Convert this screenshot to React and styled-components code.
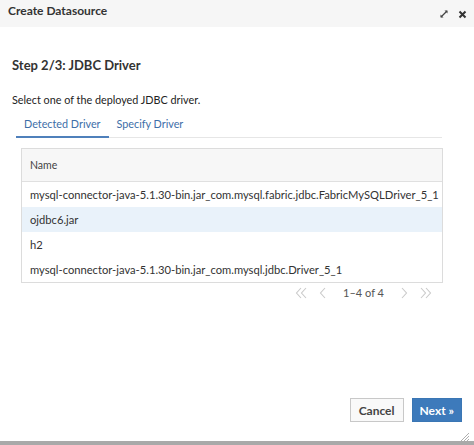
import styled, { createGlobalStyle } from "styled-components";

const GlobalStyle = createGlobalStyle`
  html, body {
    margin: 0;
    padding: 0;
    background: #fff;
  }
  body {
    font-family: Lato, "Open Sans", "Liberation Sans", sans-serif;
    color: #333;
  }
`;

const drivers = [
  "mysql-connector-java-5.1.30-bin.jar_com.mysql.fabric.jdbc.FabricMySQLDriver_5_1",
  "ojdbc6.jar",
  "h2",
  "mysql-connector-java-5.1.30-bin.jar_com.mysql.jdbc.Driver_5_1",
];

// thin chevrons for the pager, single or double
const Chevron = ({ dir = "left", double }) => {
  const flip = dir === "right" ? "scale(-1,1) translate(-14,0)" : undefined;
  return (
    <svg width="14" height="12" viewBox="0 0 14 12">
      <g transform={flip} fill="none" stroke="#c9c9c9" strokeWidth="1.1">
        <path d={double ? "M6 1 L1.5 6 L6 11" : "M9 1 L4.5 6 L9 11"} />
        {double && <path d="M11 1 L6.5 6 L11 11" />}
      </g>
    </svg>
  );
};

function App() {
  return (
    <>
      <GlobalStyle />
      <Dialog>
        <TitleBar>
          <h1>Create Datasource</h1>
          <TitleTools>
            <svg width="10" height="10" viewBox="0 0 10 10">
              <path d="M2 8 L8 2" stroke="#444" strokeWidth="1.3" />
              <path d="M5.5 1.5 H8.5 V4.5 Z" fill="#444" />
              <path d="M1.5 5.5 V8.5 H4.5 Z" fill="#444" />
            </svg>
            <svg width="9" height="9" viewBox="0 0 9 9">
              <path d="M1.5 1.5 L7.5 7.5 M7.5 1.5 L1.5 7.5" stroke="#333" strokeWidth="2" />
            </svg>
          </TitleTools>
        </TitleBar>

        <Body>
          <StepTitle>Step 2/3: JDBC Driver</StepTitle>
          <Hint>Select one of the deployed JDBC driver.</Hint>

          <Tabs>
            <Tab $active>Detected Driver</Tab>
            <Tab>Specify Driver</Tab>
          </Tabs>

          <Table>
            <HeadRow>Name</HeadRow>
            {drivers.map((d, i) => (
              <Row key={d} $selected={i === 1}>
                {d}
              </Row>
            ))}
          </Table>

          <Pager>
            <Chevron double />
            <Chevron />
            <PageInfo>1–4 of 4</PageInfo>
            <Chevron dir="right" />
            <Chevron dir="right" double />
          </Pager>
        </Body>

        <Footer>
          <Button>Cancel</Button>
          <Button $primary>Next »</Button>
        </Footer>

        <BottomEdge>
          <Grip width="10" height="10" viewBox="0 0 10 10">
            <path d="M9 1 L1 9 M9 4 L4 9 M9 7 L7 9" stroke="#999" strokeWidth="0.8" />
          </Grip>
        </BottomEdge>
      </Dialog>
    </>
  );
}

export default App;

const Dialog = styled.div`
  width: 474px;
  height: 445px;
  display: flex;
  flex-direction: column;
  background: #fff;
  position: relative;
  overflow: hidden;
`;

const TitleBar = styled.div`
  height: 27px;
  background: #f6f6f6;
  display: flex;
  align-items: flex-start;
  justify-content: space-between;
  padding: 0 7px 0 8px;

  & h1 {
    margin: 3px 0 0;
    font-size: 12px;
    font-weight: 700;
    color: #333;
  }
`;

const TitleTools = styled.div`
  display: flex;
  align-items: center;
  gap: 9px;
  margin-top: 9px;
`;

const Body = styled.div`
  padding: 0 0 0 12px;
  flex: 1;
`;

const StepTitle = styled.h2`
  margin: 30px 0 0;
  font-size: 13px;
  font-weight: 700;
  color: #333;
`;

const Hint = styled.p`
  margin: 20px 0 0;
  font-size: 10.8px;
  color: #222;
`;

const Tabs = styled.div`
  display: flex;
  margin: 9px 32px 0 4px;
  border-bottom: 1px solid #e6e6e6;
`;

const Tab = styled.div`
  font-size: 10.8px;
  color: #3d6ea8;
  padding: 2px 8px 6px;
  margin-bottom: -1px;
  border-bottom: 2px solid ${(p) => (p.$active ? "#4f80bb" : "transparent")};
`;

const Table = styled.div`
  margin: 10px 0 0 9px;
  width: 420px;
  border: 1px solid #dcdcdc;
  font-size: 11.2px;
`;

const HeadRow = styled.div`
  height: 32px;
  line-height: 32px;
  padding-left: 8px;
  background: #f7f7f7;
  border-bottom: 1px solid #e0e0e0;
  color: #444;
  font-size: 10.5px;
`;

const Row = styled.div`
  height: 25px;
  line-height: 25px;
  padding-left: 8px;
  white-space: nowrap;
  color: #333;
  background: ${(p) => (p.$selected ? "#e9f2fa" : "#fff")};
`;

const Pager = styled.div`
  display: flex;
  align-items: center;
  justify-content: flex-end;
  gap: 7px;
  width: 420px;
  margin: 3px 0 0 0;
  padding-right: 2px;
  font-size: 11px;
`;

const PageInfo = styled.span`
  color: #555;
  padding: 0 6px;
`;

const Footer = styled.div`
  display: flex;
  justify-content: flex-end;
  gap: 8px;
  padding: 0 12px 19px 0;
`;

const Button = styled.button`
  height: 24px;
  padding: 0 ${(p) => (p.$primary ? "7px" : "8px")};
  font-family: Lato, "Open Sans", "Liberation Sans", sans-serif;
  font-size: 12px;
  font-weight: 700;
  border-radius: 0;
  border: 1px solid ${(p) => (p.$primary ? "#3a76b4" : "#c8c8c8")};
  background: ${(p) => (p.$primary ? "#3d7abb" : "#f9f9f9")};
  color: ${(p) => (p.$primary ? "#fff" : "#444")};
`;

const BottomEdge = styled.div`
  height: 4px;
  background: #a9a9a9;
  position: relative;
`;

const Grip = styled.svg`
  position: absolute;
  right: 4px;
  bottom: 3px;
`;
